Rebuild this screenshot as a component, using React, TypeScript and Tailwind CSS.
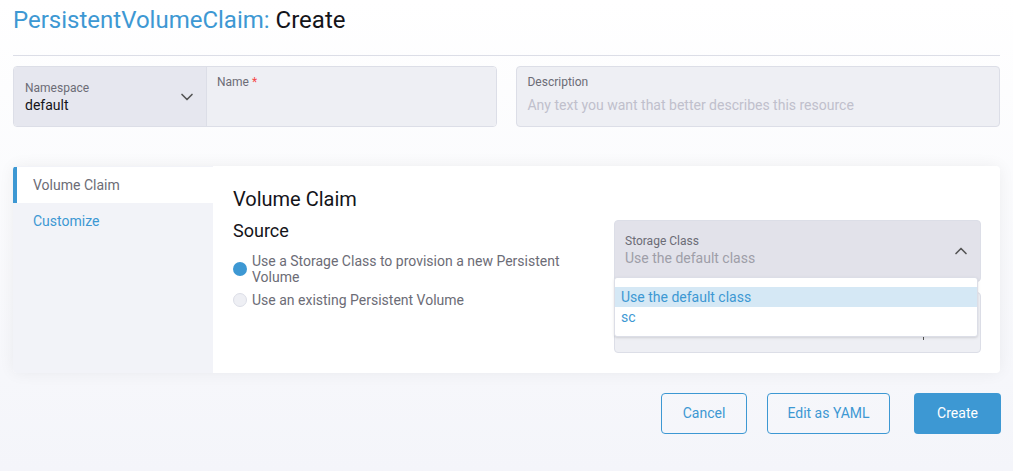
import { ChevronDown, ChevronUp } from "lucide-react";

const font = { fontFamily: "Roboto, 'Liberation Sans', sans-serif" };

export default function App() {
  return (
    <div
      className="min-h-[471px] w-[1013px] bg-gradient-to-b from-white to-[#f4f5fa] px-[13px] text-[#141419]"
      style={font}
    >
      <h1 className="pt-[6px] pb-[21px] text-[24px] leading-[28px]">
        <span className="text-[#3d98d3]">PersistentVolumeClaim: </span>
        <span>Create</span>
      </h1>
      <div className="h-px w-[987px] bg-[#dcdee7]" />

      <div className="mt-[10px] flex gap-[19px]">
        <div className="flex h-[61px] w-[485px] overflow-hidden rounded-[4px] border border-[#dcdee7]">
          <div className="flex w-[193px] items-center justify-between border-r border-[#dcdee7] bg-[#e6e7ef] pl-[11px] pr-[9px]">
            <div>
              <div className="text-[12px] leading-[16px] text-[#6c6c76]">Namespace</div>
              <div className="text-[14px] leading-[18px]">default</div>
            </div>
            <ChevronDown className="h-[20px] w-[20px] text-[#555]" strokeWidth={2} />
          </div>
          <div className="flex-1 bg-[#eeeff4] px-[10px] pt-[7px]">
            <div className="text-[12px] leading-[16px] text-[#6c6c76]">
              Name <span className="text-[#f64747]">*</span>
            </div>
          </div>
        </div>
        <div className="h-[61px] w-[484px] rounded-[4px] border border-[#dcdee7] bg-[#eeeff4] px-[10px] pt-[7px]">
          <div className="text-[12px] leading-[16px] text-[#6c6c76]">Description</div>
          <div className="mt-[5px] text-[14px] leading-[20px] text-[#c0c0cc]">
            Any text you want that better describes this resource
          </div>
        </div>
      </div>

      <div className="mt-[39px] flex h-[207px] w-[987px] overflow-hidden rounded-[4px] bg-white shadow-[0_0_16px_rgba(0,0,0,0.06)]">
        <div className="w-[200px] bg-[#f2f3f8] pt-[1px]">
          <div className="flex h-[36px] items-center border-l-[4px] border-[#3d98d3] bg-white pl-[16px] text-[14px] text-[#6c6c76]">
            Volume Claim
          </div>
          <div className="flex h-[36px] items-center pl-[20px] text-[14px] text-[#3d98d3]">
            Customize
          </div>
        </div>
        <div className="flex flex-1 pl-[20px] pr-[19px]">
          <div className="w-[340px]">
            <h3 className="pt-[20px] text-[20px] leading-[26px]">Volume Claim</h3>
            <h4 className="mt-[8px] text-[18px] leading-[22px]">Source</h4>
            <div className="mt-[11px] flex items-center gap-[5px]">
              <span className="h-[14px] w-[14px] shrink-0 rounded-full bg-[#3d98d3]" />
              <span className="text-[14px] leading-[16px] text-[#6c6c76]">
                Use a Storage Class to provision a new Persistent Volume
              </span>
            </div>
            <div className="mt-[7px] flex items-center gap-[5px]">
              <span className="h-[14px] w-[14px] shrink-0 rounded-full border border-[#dcdee7] bg-[#eeeff4]" />
              <span className="text-[14px] leading-[16px] text-[#6c6c76]">
                Use an existing Persistent Volume
              </span>
            </div>
          </div>
          <div className="relative ml-auto mt-[54px] w-[367px]">
            <div className="flex h-[62px] items-center justify-between rounded-[4px] border border-[#dcdee7] bg-[#e2e2ea] pl-[10px] pr-[9px]">
              <div className="pb-[2px]">
                <div className="text-[12px] leading-[16px] text-[#6c6c76]">Storage Class</div>
                <div className="text-[14px] leading-[18px] text-[#9e9ea8]">Use the default class</div>
              </div>
              <ChevronUp className="h-[20px] w-[20px] text-[#555]" strokeWidth={2} />
            </div>
            <div className="mt-[10px] h-[61px] rounded-[4px] border border-[#dcdee7] bg-[#eeeff4]">
              <div className="ml-[308px] mt-[35px] h-[12px] w-px bg-[#555]" />
            </div>
            <div className="absolute left-0 top-[57px] w-[364px] rounded-[3px] border border-[#dcdee7] bg-white py-[9px] shadow-sm">
              <div className="h-[20px] bg-[#d5e8f5] px-[6px] text-[14px] leading-[20px] text-[#3d98d3]">
                Use the default class
              </div>
              <div className="h-[20px] px-[6px] text-[14px] leading-[20px] text-[#3d98d3]">sc</div>
            </div>
          </div>
        </div>
      </div>

      <div className="mt-[20px] flex w-[988px] justify-end gap-[20px]">
        <button className="h-[41px] w-[86px] rounded-[4px] border border-[#3d98d3] text-[14px] text-[#3d98d3]">
          Cancel
        </button>
        <button className="h-[41px] w-[123px] rounded-[4px] border border-[#3d98d3] text-[14px] text-[#3d98d3]">
          Edit as YAML
        </button>
        <button className="ml-[4px] h-[41px] w-[87px] rounded-[4px] bg-[#3d98d3] text-[14px] text-white">
          Create
        </button>
      </div>
    </div>
  );
}
